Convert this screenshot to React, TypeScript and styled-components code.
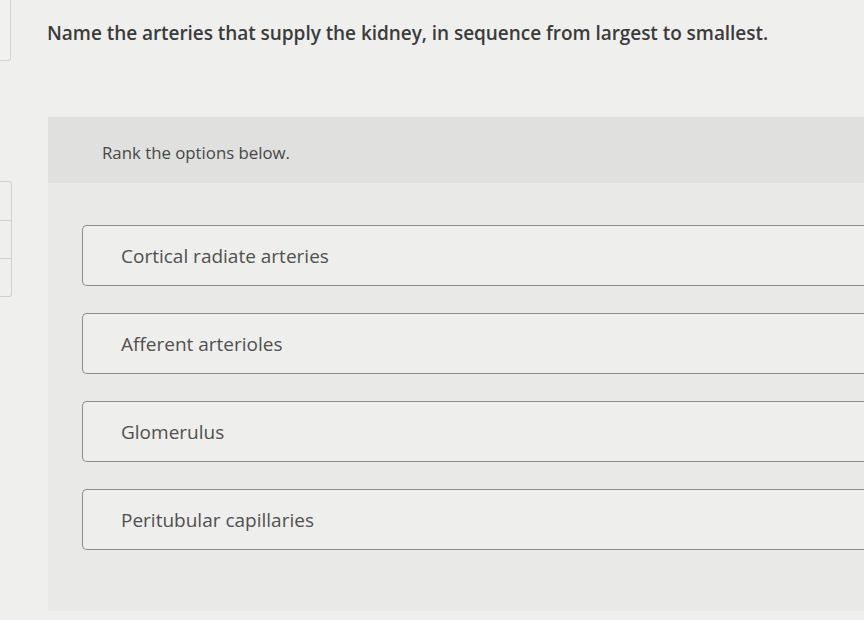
import styled, { createGlobalStyle } from 'styled-components'

const GlobalStyle = createGlobalStyle`
  html, body {
    margin: 0;
    padding: 0;
    background: #efefed;
    overflow: hidden;
  }
  body {
    font-family: "Open Sans", Lato, sans-serif;
    width: 864px;
    height: 620px;
  }
`

const Page = styled.div`
  display: flex;
  width: 864px;
  height: 620px;
  overflow: hidden;
`

const Sidebar = styled.aside`
  width: 12px;
  flex: none;
  display: flex;
  flex-direction: column;
`

const TopTab = styled.div`
  width: 10px;
  height: 60px;
  border-right: 1px solid #d2d2cf;
  border-bottom: 1px solid #d2d2cf;
  border-bottom-right-radius: 3px;
  background: #f1f1ef;
`

const NavStack = styled.div`
  margin-top: 120px;
  display: flex;
  flex-direction: column;
  border: 1px solid #d0d0cd;
  border-left: none;
  border-radius: 0 3px 3px 0;
`

const NavCell = styled.div<{ $h: number }>`
  height: ${(p) => p.$h}px;
  & + & {
    border-top: 1px solid #d0d0cd;
  }
`

const Main = styled.main`
  flex: 1;
  padding-left: 36px;
  min-width: 0;
`

const Question = styled.h1`
  margin: 22px 0 0 -1px;
  font-size: 19px;
  line-height: 22px;
  font-weight: 600;
  color: #3b3b3b;
  letter-spacing: -0.05px;
  white-space: nowrap;
`

const Panel = styled.section`
  margin-top: 73px;
  height: 494px;
  background: #e9e9e7;
  margin-right: -20px;
`

const PanelHeader = styled.div`
  height: 66px;
  display: flex;
  align-items: center;
  padding-left: 54px;
  background: #e0e0de;
  font-size: 16.8px;
  color: #474747;
  padding-top: 4px;
  box-sizing: border-box;
`

const OptionList = styled.div`
  display: flex;
  flex-direction: column;
  gap: 27px;
  padding: 42px 0 0 34px;
`

const Option = styled.div`
  height: 61px;
  box-sizing: border-box;
  border: 1.5px solid #8d8d8b;
  border-right: none;
  border-radius: 5px 0 0 5px;
  background: #eeeeec;
  display: flex;
  align-items: center;
  padding-left: 38px;
  font-size: 19px;
  color: #505050;
`

const options = [
  'Cortical radiate arteries',
  'Afferent arterioles',
  'Glomerulus',
  'Peritubular capillaries',
]

export default function App() {
  return (
    <Page>
      <GlobalStyle />
      <Sidebar>
        <TopTab />
        <NavStack>
          <NavCell $h={38} />
          <NavCell $h={37} />
          <NavCell $h={37} />
        </NavStack>
      </Sidebar>
      <Main>
        <Question>Name the arteries that supply the kidney, in sequence from largest to smallest.</Question>
        <Panel>
          <PanelHeader>Rank the options below.</PanelHeader>
          <OptionList>
            {options.map((o) => (
              <Option key={o}>{o}</Option>
            ))}
          </OptionList>
        </Panel>
      </Main>
    </Page>
  )
}
